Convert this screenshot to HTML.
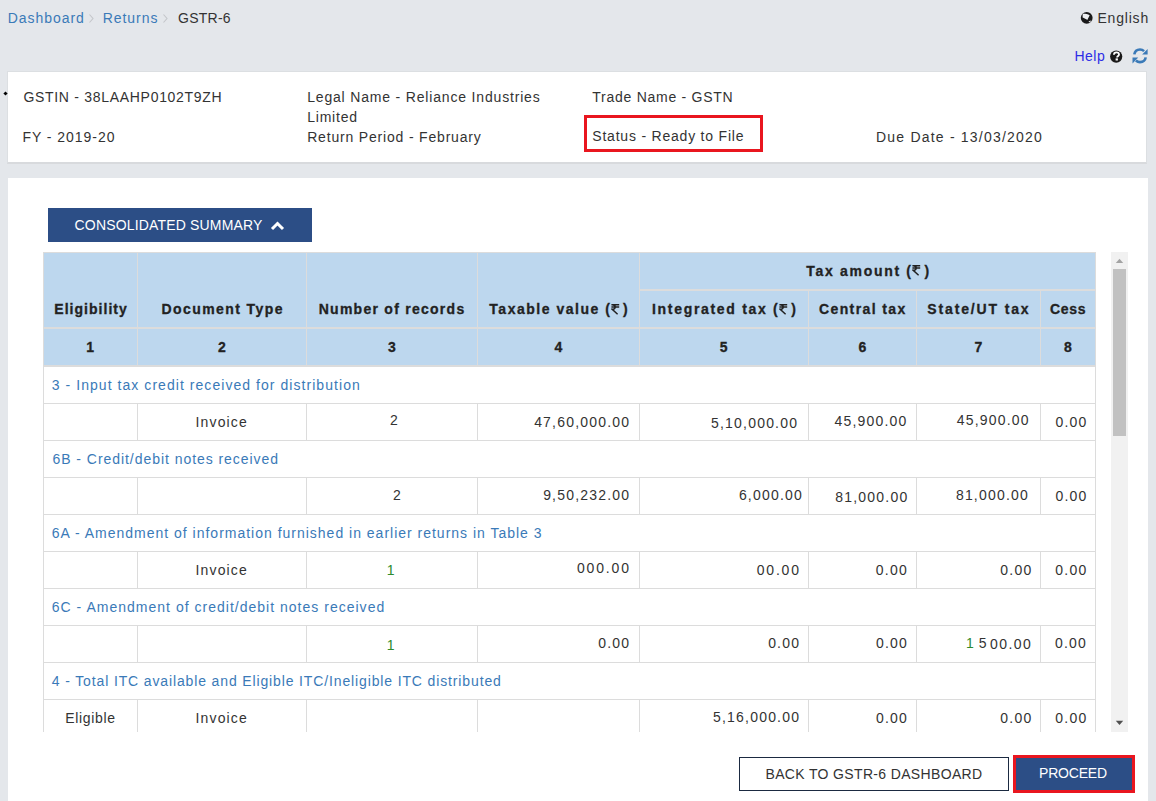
<!DOCTYPE html>
<html><head><meta charset="utf-8"><style>
html,body{margin:0;padding:0}
body{width:1156px;height:801px;overflow:hidden;position:relative;background:#e4e7eb;font-family:"Liberation Sans",sans-serif}
.t{position:absolute;white-space:pre;line-height:14px;font-family:"Liberation Sans",sans-serif}
.rr{position:relative;color:transparent;display:inline-block;-webkit-text-stroke:0 transparent}
.p1{position:absolute;left:7px;top:71px;width:1138px;height:90px;background:#fff;border:1px solid #dcdfe2;border-bottom:2px solid #d8dadd}
.p2{position:absolute;left:8px;top:178px;width:1140px;height:640px;background:#fff}
.btn1{position:absolute;left:48px;top:208px;width:264px;height:34px;background:#2c4e86}
.st{position:absolute;left:584px;top:115px;width:173px;height:31px;border:3px solid #e9161f}
.back{position:absolute;left:739px;top:757px;width:268px;height:32px;border:1px solid #1b2a41;background:#fff}
.proc{position:absolute;left:1013px;top:755px;width:116px;height:32px;border:3px solid #e9161f;background:#2c4e86}
.sb{position:absolute;left:1111px;top:252px;width:17px;height:480px;background:#f1f1f1}
.th{position:absolute;left:1113px;top:269px;width:13px;height:167px;background:#c1c1c1}
</style></head><body>
<div class="p1"></div>
<div class="p2"></div>
<div style="position:absolute;left:4px;top:92px;width:3px;height:3px;background:#000;transform:rotate(45deg)"></div>
<div class="st"></div>
<div class="btn1"></div>
<svg style="position:absolute;left:270px;top:220px" width="15" height="11" viewBox="0 0 15 11"><path d="M2 9L7.5 3.5L13 9" fill="none" stroke="#fff" stroke-width="3"/></svg>
<div style="position:absolute;left:43px;top:252px;width:1053px;height:114px;background:#bdd7ee;"></div>
<div style="position:absolute;left:43px;top:252px;width:1053px;height:1px;background:#dcdcdc;"></div>
<div style="position:absolute;left:639px;top:289px;width:457px;height:2px;background:#dcdcdc;"></div>
<div style="position:absolute;left:43px;top:327px;width:1053px;height:2px;background:#dcdcdc;"></div>
<div style="position:absolute;left:43px;top:365px;width:1053px;height:2px;background:#dcdcdc;"></div>
<div style="position:absolute;left:43px;top:403px;width:1053px;height:1px;background:#dcdcdc;"></div>
<div style="position:absolute;left:43px;top:440px;width:1053px;height:1px;background:#dcdcdc;"></div>
<div style="position:absolute;left:43px;top:477px;width:1053px;height:1px;background:#dcdcdc;"></div>
<div style="position:absolute;left:43px;top:514px;width:1053px;height:1px;background:#dcdcdc;"></div>
<div style="position:absolute;left:43px;top:551px;width:1053px;height:1px;background:#dcdcdc;"></div>
<div style="position:absolute;left:43px;top:588px;width:1053px;height:1px;background:#dcdcdc;"></div>
<div style="position:absolute;left:43px;top:625px;width:1053px;height:1px;background:#dcdcdc;"></div>
<div style="position:absolute;left:43px;top:662px;width:1053px;height:1px;background:#dcdcdc;"></div>
<div style="position:absolute;left:43px;top:699px;width:1053px;height:1px;background:#dcdcdc;"></div>
<div style="position:absolute;left:43px;top:252px;width:1px;height:480px;background:#dcdcdc;"></div>
<div style="position:absolute;left:1095px;top:252px;width:1px;height:480px;background:#dcdcdc;"></div>
<div style="position:absolute;left:137px;top:252px;width:1px;height:113px;background:#dcdcdc;"></div>
<div style="position:absolute;left:306px;top:252px;width:1px;height:113px;background:#dcdcdc;"></div>
<div style="position:absolute;left:477px;top:252px;width:1px;height:113px;background:#dcdcdc;"></div>
<div style="position:absolute;left:639px;top:252px;width:1px;height:113px;background:#dcdcdc;"></div>
<div style="position:absolute;left:808px;top:289px;width:1px;height:76px;background:#dcdcdc;"></div>
<div style="position:absolute;left:916px;top:289px;width:1px;height:76px;background:#dcdcdc;"></div>
<div style="position:absolute;left:1040px;top:289px;width:1px;height:76px;background:#dcdcdc;"></div>
<div style="position:absolute;left:137px;top:403px;width:1px;height:37px;background:#dcdcdc;"></div>
<div style="position:absolute;left:306px;top:403px;width:1px;height:37px;background:#dcdcdc;"></div>
<div style="position:absolute;left:477px;top:403px;width:1px;height:37px;background:#dcdcdc;"></div>
<div style="position:absolute;left:639px;top:403px;width:1px;height:37px;background:#dcdcdc;"></div>
<div style="position:absolute;left:808px;top:403px;width:1px;height:37px;background:#dcdcdc;"></div>
<div style="position:absolute;left:916px;top:403px;width:1px;height:37px;background:#dcdcdc;"></div>
<div style="position:absolute;left:1040px;top:403px;width:1px;height:37px;background:#dcdcdc;"></div>
<div style="position:absolute;left:137px;top:477px;width:1px;height:37px;background:#dcdcdc;"></div>
<div style="position:absolute;left:306px;top:477px;width:1px;height:37px;background:#dcdcdc;"></div>
<div style="position:absolute;left:477px;top:477px;width:1px;height:37px;background:#dcdcdc;"></div>
<div style="position:absolute;left:639px;top:477px;width:1px;height:37px;background:#dcdcdc;"></div>
<div style="position:absolute;left:808px;top:477px;width:1px;height:37px;background:#dcdcdc;"></div>
<div style="position:absolute;left:916px;top:477px;width:1px;height:37px;background:#dcdcdc;"></div>
<div style="position:absolute;left:1040px;top:477px;width:1px;height:37px;background:#dcdcdc;"></div>
<div style="position:absolute;left:137px;top:551px;width:1px;height:37px;background:#dcdcdc;"></div>
<div style="position:absolute;left:306px;top:551px;width:1px;height:37px;background:#dcdcdc;"></div>
<div style="position:absolute;left:477px;top:551px;width:1px;height:37px;background:#dcdcdc;"></div>
<div style="position:absolute;left:639px;top:551px;width:1px;height:37px;background:#dcdcdc;"></div>
<div style="position:absolute;left:808px;top:551px;width:1px;height:37px;background:#dcdcdc;"></div>
<div style="position:absolute;left:916px;top:551px;width:1px;height:37px;background:#dcdcdc;"></div>
<div style="position:absolute;left:1040px;top:551px;width:1px;height:37px;background:#dcdcdc;"></div>
<div style="position:absolute;left:137px;top:625px;width:1px;height:37px;background:#dcdcdc;"></div>
<div style="position:absolute;left:306px;top:625px;width:1px;height:37px;background:#dcdcdc;"></div>
<div style="position:absolute;left:477px;top:625px;width:1px;height:37px;background:#dcdcdc;"></div>
<div style="position:absolute;left:639px;top:625px;width:1px;height:37px;background:#dcdcdc;"></div>
<div style="position:absolute;left:808px;top:625px;width:1px;height:37px;background:#dcdcdc;"></div>
<div style="position:absolute;left:916px;top:625px;width:1px;height:37px;background:#dcdcdc;"></div>
<div style="position:absolute;left:1040px;top:625px;width:1px;height:37px;background:#dcdcdc;"></div>
<div style="position:absolute;left:137px;top:699px;width:1px;height:33px;background:#dcdcdc;"></div>
<div style="position:absolute;left:306px;top:699px;width:1px;height:33px;background:#dcdcdc;"></div>
<div style="position:absolute;left:477px;top:699px;width:1px;height:33px;background:#dcdcdc;"></div>
<div style="position:absolute;left:639px;top:699px;width:1px;height:33px;background:#dcdcdc;"></div>
<div style="position:absolute;left:808px;top:699px;width:1px;height:33px;background:#dcdcdc;"></div>
<div style="position:absolute;left:916px;top:699px;width:1px;height:33px;background:#dcdcdc;"></div>
<div style="position:absolute;left:1040px;top:699px;width:1px;height:33px;background:#dcdcdc;"></div>
<div class="sb"></div><div class="th"></div>
<svg style="position:absolute;left:1115px;top:258px" width="9" height="6"><path d="M0.8 5H8.2L4.5 0.8Z" fill="#a3a3a3"/></svg>
<svg style="position:absolute;left:1115px;top:720px" width="9" height="6"><path d="M0.8 0.8H8.2L4.5 5Z" fill="#505050"/></svg>
<div class="back"></div>
<div class="proc"></div>
<!-- breadcrumb chevrons -->
<svg style="position:absolute;left:88px;top:13px" width="7" height="11"><path d="M1.5 1.5L5 5.5L1.5 9.5" fill="none" stroke="#c3c6ca" stroke-width="1.1"/></svg>
<svg style="position:absolute;left:162px;top:13px" width="7" height="11"><path d="M1.5 1.5L5 5.5L1.5 9.5" fill="none" stroke="#c3c6ca" stroke-width="1.1"/></svg>
<!-- globe -->
<svg style="position:absolute;left:1078px;top:9px" width="18" height="18" viewBox="0 0 18 18"><circle cx="8.7" cy="8.8" r="5.9" fill="#1a1a1a"/><path d="M4.7 4.8C6.5 4.6 9.5 5 11.7 6.2L9.3 11C8.2 10 6.2 9 4.6 8.4Z" fill="#eef0f2"/><path d="M10.4 12.6L12.9 11.6L12.2 13.6Z" fill="#eef0f2"/></svg>
<!-- help circle -->
<svg style="position:absolute;left:1110px;top:49.7px" width="13" height="13" viewBox="0 0 13 13"><circle cx="6.2" cy="6.6" r="6.1" fill="#1a1a1a"/><path d="M3.9 4.8C3.9 3 5 2.3 6.4 2.3C7.9 2.3 9 3.1 9 4.5C9 6 7.1 6.1 7.1 7.6" fill="none" stroke="#fff" stroke-width="1.8"/><rect x="5.6" y="8.4" width="2.3" height="2.1" fill="#fff"/></svg>
<!-- refresh -->
<svg style="position:absolute;left:1132px;top:47.5px" width="16" height="16" viewBox="0 0 16 16"><path d="M2.3 6.4C2.8 3.2 5.2 1.5 8 1.5C9.6 1.5 11 2.1 12.1 3.1" fill="none" stroke="#3a7ab8" stroke-width="2.6"/><path d="M15.6 0.9V6.4H10.1Z" fill="#3a7ab8"/><path d="M13.7 9.4C13.2 12.6 10.8 14.1 8 14.1C6.4 14.1 5 13.5 3.9 12.5" fill="none" stroke="#3a7ab8" stroke-width="2.6"/><path d="M0.5 15.4V9.4H6.2Z" fill="#3a7ab8"/></svg>
<div class="t" style="left:7.80px;top:10.75px;font-size:14px;font-weight:400;color:#3a7ab8;letter-spacing:0.937px">Dashboard</div>
<div class="t" style="left:102.80px;top:11.15px;font-size:14px;font-weight:400;color:#3a7ab8;letter-spacing:0.930px">Returns</div>
<div class="t" style="left:178.00px;top:11.15px;font-size:14px;font-weight:400;color:#333;letter-spacing:0.250px">GSTR-6</div>
<div class="t" style="left:1097.40px;top:11.05px;font-size:14px;font-weight:400;color:#333;letter-spacing:0.812px">English</div>
<div class="t" style="left:1074.40px;top:48.90px;font-size:14px;font-weight:400;color:#2d2de6;letter-spacing:0.531px">Help</div>
<div class="t" style="left:23.40px;top:90.15px;font-size:14px;font-weight:400;color:#333;letter-spacing:0.703px">GSTIN - 38LAAHP0102T9ZH</div>
<div class="t" style="left:22.40px;top:130.45px;font-size:14px;font-weight:400;color:#333;letter-spacing:0.971px">FY - 2019-20</div>
<div class="t" style="left:307.20px;top:90.15px;font-size:14px;font-weight:400;color:#333;letter-spacing:0.823px">Legal Name - Reliance Industries</div>
<div class="t" style="left:307.20px;top:110.15px;font-size:14px;font-weight:400;color:#333;letter-spacing:0.790px">Limited</div>
<div class="t" style="left:307.20px;top:130.45px;font-size:14px;font-weight:400;color:#333;letter-spacing:0.816px">Return Period - February</div>
<div class="t" style="left:592.30px;top:89.75px;font-size:14px;font-weight:400;color:#333;letter-spacing:0.737px">Trade Name - GSTN</div>
<div class="t" style="left:592.30px;top:128.75px;font-size:14px;font-weight:400;color:#333;letter-spacing:0.789px">Status - Ready to File</div>
<div class="t" style="left:876.00px;top:130.35px;font-size:14px;font-weight:400;color:#333;letter-spacing:1.207px">Due Date - 13/03/2020</div>
<div class="t" style="left:74.60px;top:217.95px;font-size:14px;font-weight:400;color:#fff;letter-spacing:0.164px">CONSOLIDATED SUMMARY</div>
<div class="t" style="left:806.30px;top:264.15px;font-size:14px;font-weight:700;color:#222;letter-spacing:1.693px;-webkit-text-stroke:0.3px #222">Tax amount (<span class="rr">R<svg class="rp" viewBox="0 0 9 11" width="9" height="11" style="position:absolute;left:-0.3px;top:1.3px"><path d="M0.4 0.8H8.2M0.4 3.0H8.2M1.2 0.8C5.2 0.8 5.4 5.3 1.2 5.3L6.6 10.3" fill="none" stroke="#222" stroke-width="1.45"/></svg></span>)</div>
<div class="t" style="left:54.30px;top:302.35px;font-size:14px;font-weight:700;color:#222;letter-spacing:1.026px;-webkit-text-stroke:0.3px #222">Eligibility</div>
<div class="t" style="left:161.50px;top:302.35px;font-size:14px;font-weight:700;color:#222;letter-spacing:1.418px;-webkit-text-stroke:0.3px #222">Document Type</div>
<div class="t" style="left:318.70px;top:302.35px;font-size:14px;font-weight:700;color:#222;letter-spacing:1.265px;-webkit-text-stroke:0.3px #222">Number of records</div>
<div class="t" style="left:489.30px;top:302.35px;font-size:14px;font-weight:700;color:#222;letter-spacing:1.516px;-webkit-text-stroke:0.3px #222">Taxable value (<span class="rr">R<svg class="rp" viewBox="0 0 9 11" width="9" height="11" style="position:absolute;left:-0.3px;top:1.3px"><path d="M0.4 0.8H8.2M0.4 3.0H8.2M1.2 0.8C5.2 0.8 5.4 5.3 1.2 5.3L6.6 10.3" fill="none" stroke="#222" stroke-width="1.45"/></svg></span>)</div>
<div class="t" style="left:652.00px;top:302.35px;font-size:14px;font-weight:700;color:#222;letter-spacing:1.690px;-webkit-text-stroke:0.3px #222">Integrated tax (<span class="rr">R<svg class="rp" viewBox="0 0 9 11" width="9" height="11" style="position:absolute;left:-0.3px;top:1.3px"><path d="M0.4 0.8H8.2M0.4 3.0H8.2M1.2 0.8C5.2 0.8 5.4 5.3 1.2 5.3L6.6 10.3" fill="none" stroke="#222" stroke-width="1.45"/></svg></span>)</div>
<div class="t" style="left:819.00px;top:302.35px;font-size:14px;font-weight:700;color:#222;letter-spacing:1.383px;-webkit-text-stroke:0.3px #222">Central tax</div>
<div class="t" style="left:927.30px;top:302.35px;font-size:14px;font-weight:700;color:#222;letter-spacing:1.852px;-webkit-text-stroke:0.3px #222">State/UT tax</div>
<div class="t" style="left:1049.90px;top:302.35px;font-size:14px;font-weight:700;color:#222;letter-spacing:0.706px;-webkit-text-stroke:0.3px #222">Cess</div>
<div class="t" style="left:51.80px;top:378.15px;font-size:14px;font-weight:400;color:#3a7ab8;letter-spacing:1.051px">3 - Input tax credit received for distribution</div>
<div class="t" style="left:52.50px;top:452.15px;font-size:14px;font-weight:400;color:#3a7ab8;letter-spacing:0.951px">6B - Credit/debit notes received</div>
<div class="t" style="left:51.80px;top:526.25px;font-size:14px;font-weight:400;color:#3a7ab8;letter-spacing:0.992px">6A - Amendment of information furnished in earlier returns in Table 3</div>
<div class="t" style="left:51.80px;top:600.15px;font-size:14px;font-weight:400;color:#3a7ab8;letter-spacing:1.011px">6C - Amendment of credit/debit notes received</div>
<div class="t" style="left:51.80px;top:674.15px;font-size:14px;font-weight:400;color:#3a7ab8;letter-spacing:0.865px">4 - Total ITC available and Eligible ITC/Ineligible ITC distributed</div>
<div class="t" style="left:195.60px;top:415.15px;font-size:14px;font-weight:400;color:#333;letter-spacing:1.138px">Invoice</div>
<div class="t" style="left:389.90px;top:413.05px;font-size:14px;font-weight:400;color:#333;letter-spacing:0.000px">2</div>
<div class="t" style="left:534.14px;top:415.15px;font-size:14px;font-weight:400;color:#333;letter-spacing:1.200px">47,60,000.00</div>
<div class="t" style="left:711.03px;top:416.05px;font-size:14px;font-weight:400;color:#333;letter-spacing:1.200px">5,10,000.00</div>
<div class="t" style="left:834.50px;top:414.05px;font-size:14px;font-weight:400;color:#333;letter-spacing:1.200px">45,900.00</div>
<div class="t" style="left:956.70px;top:413.15px;font-size:14px;font-weight:400;color:#333;letter-spacing:1.200px">45,900.00</div>
<div class="t" style="left:1055.44px;top:415.15px;font-size:14px;font-weight:400;color:#333;letter-spacing:1.200px">0.00</div>
<div class="t" style="left:393.00px;top:487.95px;font-size:14px;font-weight:400;color:#333;letter-spacing:0.000px">2</div>
<div class="t" style="left:543.13px;top:488.15px;font-size:14px;font-weight:400;color:#333;letter-spacing:1.200px">9,50,232.00</div>
<div class="t" style="left:738.89px;top:488.45px;font-size:14px;font-weight:400;color:#333;letter-spacing:1.200px">6,000.00</div>
<div class="t" style="left:835.30px;top:489.65px;font-size:14px;font-weight:400;color:#333;letter-spacing:1.200px">81,000.00</div>
<div class="t" style="left:955.90px;top:487.65px;font-size:14px;font-weight:400;color:#333;letter-spacing:1.200px">81,000.00</div>
<div class="t" style="left:1055.44px;top:488.85px;font-size:14px;font-weight:400;color:#333;letter-spacing:1.200px">0.00</div>
<div class="t" style="left:195.60px;top:562.85px;font-size:14px;font-weight:400;color:#333;letter-spacing:1.138px">Invoice</div>
<div class="t" style="left:386.80px;top:562.85px;font-size:14px;font-weight:400;color:#2e8b2e;letter-spacing:0.000px">1</div>
<div class="t" style="left:577.00px;top:560.65px;font-size:14px;font-weight:400;color:#333;letter-spacing:1.833px">000.00</div>
<div class="t" style="left:756.80px;top:562.85px;font-size:14px;font-weight:400;color:#333;letter-spacing:1.788px">00.00</div>
<div class="t" style="left:875.84px;top:562.85px;font-size:14px;font-weight:400;color:#333;letter-spacing:1.200px">0.00</div>
<div class="t" style="left:1000.34px;top:562.85px;font-size:14px;font-weight:400;color:#333;letter-spacing:1.200px">0.00</div>
<div class="t" style="left:1055.34px;top:562.85px;font-size:14px;font-weight:400;color:#333;letter-spacing:1.200px">0.00</div>
<div class="t" style="left:386.80px;top:638.05px;font-size:14px;font-weight:400;color:#2e8b2e;letter-spacing:0.000px">1</div>
<div class="t" style="left:598.24px;top:636.15px;font-size:14px;font-weight:400;color:#333;letter-spacing:1.200px">0.00</div>
<div class="t" style="left:768.14px;top:636.35px;font-size:14px;font-weight:400;color:#333;letter-spacing:1.200px">0.00</div>
<div class="t" style="left:875.94px;top:636.35px;font-size:14px;font-weight:400;color:#333;letter-spacing:1.200px">0.00</div>
<div class="t" style="left:966.10px;top:636.05px;font-size:14px;font-weight:400;color:#2e8b2e;letter-spacing:0.000px">1</div>
<div class="t" style="left:978.80px;top:636.05px;font-size:14px;font-weight:400;color:#333;letter-spacing:0.000px">5</div>
<div class="t" style="left:990.10px;top:636.65px;font-size:14px;font-weight:400;color:#333;letter-spacing:1.413px">00.00</div>
<div class="t" style="left:1054.94px;top:636.35px;font-size:14px;font-weight:400;color:#333;letter-spacing:1.200px">0.00</div>
<div class="t" style="left:65.30px;top:711.35px;font-size:14px;font-weight:400;color:#333;letter-spacing:0.664px">Eligible</div>
<div class="t" style="left:195.60px;top:711.35px;font-size:14px;font-weight:400;color:#333;letter-spacing:1.138px">Invoice</div>
<div class="t" style="left:713.03px;top:709.85px;font-size:14px;font-weight:400;color:#333;letter-spacing:1.200px">5,16,000.00</div>
<div class="t" style="left:875.94px;top:710.65px;font-size:14px;font-weight:400;color:#333;letter-spacing:1.200px">0.00</div>
<div class="t" style="left:1000.34px;top:710.65px;font-size:14px;font-weight:400;color:#333;letter-spacing:1.200px">0.00</div>
<div class="t" style="left:1055.34px;top:710.65px;font-size:14px;font-weight:400;color:#333;letter-spacing:1.200px">0.00</div>
<div class="t" style="left:765.50px;top:766.75px;font-size:14px;font-weight:400;color:#333;letter-spacing:0.344px">BACK TO GSTR-6 DASHBOARD</div>
<div class="t" style="left:1039.00px;top:766.45px;font-size:14px;font-weight:400;color:#fff;letter-spacing:-0.204px">PROCEED</div>
<div class="t" style="left:86.25px;top:340.45px;font-size:14px;font-weight:700;color:#222;letter-spacing:0.000px;-webkit-text-stroke:0.3px #222">1</div>
<div class="t" style="left:217.95px;top:340.45px;font-size:14px;font-weight:700;color:#222;letter-spacing:0.000px;-webkit-text-stroke:0.3px #222">2</div>
<div class="t" style="left:387.90px;top:340.45px;font-size:14px;font-weight:700;color:#222;letter-spacing:0.000px;-webkit-text-stroke:0.3px #222">3</div>
<div class="t" style="left:554.40px;top:340.45px;font-size:14px;font-weight:700;color:#222;letter-spacing:0.000px;-webkit-text-stroke:0.3px #222">4</div>
<div class="t" style="left:719.85px;top:340.45px;font-size:14px;font-weight:700;color:#222;letter-spacing:0.000px;-webkit-text-stroke:0.3px #222">5</div>
<div class="t" style="left:858.45px;top:340.45px;font-size:14px;font-weight:700;color:#222;letter-spacing:0.000px;-webkit-text-stroke:0.3px #222">6</div>
<div class="t" style="left:974.45px;top:340.45px;font-size:14px;font-weight:700;color:#222;letter-spacing:0.000px;-webkit-text-stroke:0.3px #222">7</div>
<div class="t" style="left:1063.95px;top:340.45px;font-size:14px;font-weight:700;color:#222;letter-spacing:0.000px;-webkit-text-stroke:0.3px #222">8</div>
</body></html>
